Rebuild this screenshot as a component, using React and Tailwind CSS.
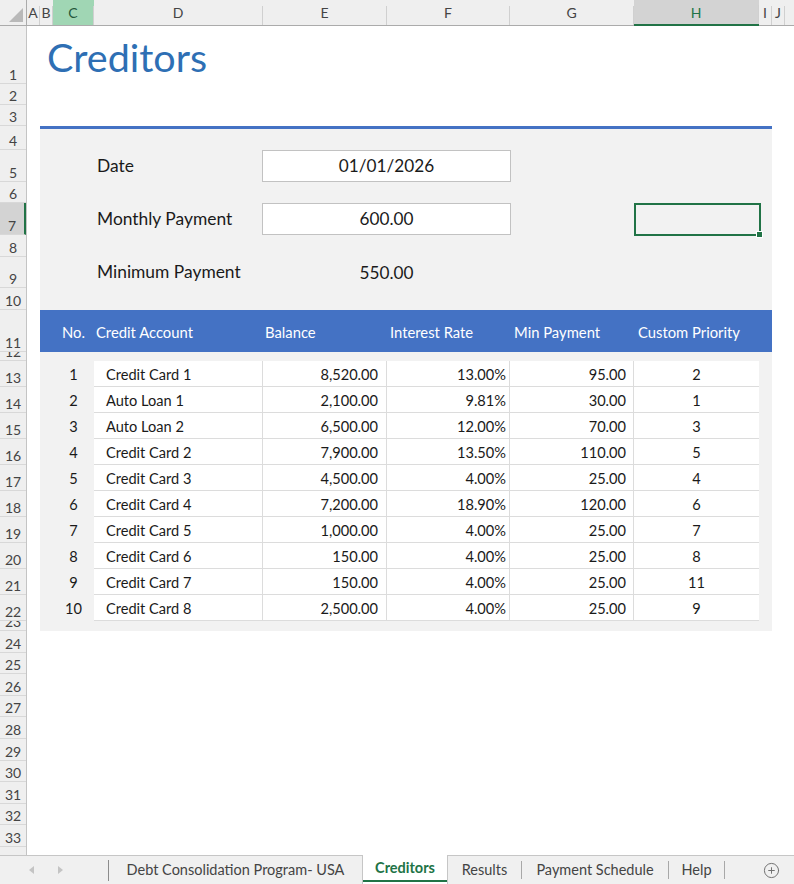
import { CirclePlus } from "lucide-react";

const rows = [
  [1, "Credit Card 1", "8,520.00", "13.00%", "95.00", "2"],
  [2, "Auto Loan 1", "2,100.00", "9.81%", "30.00", "1"],
  [3, "Auto Loan 2", "6,500.00", "12.00%", "70.00", "3"],
  [4, "Credit Card 2", "7,900.00", "13.50%", "110.00", "5"],
  [5, "Credit Card 3", "4,500.00", "4.00%", "25.00", "4"],
  [6, "Credit Card 4", "7,200.00", "18.90%", "120.00", "6"],
  [7, "Credit Card 5", "1,000.00", "4.00%", "25.00", "7"],
  [8, "Credit Card 6", "150.00", "4.00%", "25.00", "8"],
  [9, "Credit Card 7", "150.00", "4.00%", "25.00", "11"],
  [10, "Credit Card 8", "2,500.00", "4.00%", "25.00", "9"],
];

// row header labels with their heights
const rowHeads = [
  ["1", "h-[58px]"],
  ["2", "h-[21px]"],
  ["3", "h-[21px]"],
  ["4", "h-[24px]"],
  ["5", "h-[32px]"],
  ["6", "h-[21px]"],
  ["7", "h-[32px]"],
  ["8", "h-[22px]"],
  ["9", "h-[31px]"],
  ["10", "h-[22px]"],
  ["11", "h-[42px]"],
  ["12", "h-[9px]"],
  ["13", "h-[26px]"],
  ["14", "h-[26px]"],
  ["15", "h-[26px]"],
  ["16", "h-[26px]"],
  ["17", "h-[26px]"],
  ["18", "h-[26px]"],
  ["19", "h-[26px]"],
  ["20", "h-[26px]"],
  ["21", "h-[26px]"],
  ["22", "h-[26px]"],
  ["23", "h-[10px]"],
  ["24", "h-[21.6px]"],
  ["25", "h-[21.6px]"],
  ["26", "h-[21.6px]"],
  ["27", "h-[21.6px]"],
  ["28", "h-[21.6px]"],
  ["29", "h-[21.6px]"],
  ["30", "h-[21.6px]"],
  ["31", "h-[21.6px]"],
  ["32", "h-[21.6px]"],
  ["33", "h-[21.6px]"],
  ["34", "h-[21.6px]"],
];

const cols = [
  ["A", "w-[13px]", ""],
  ["B", "w-[13px]", ""],
  ["C", "w-[41px]", "bg-[#a0d6b4] text-[#24573a]"],
  ["D", "w-[169px]", ""],
  ["E", "w-[124px]", ""],
  ["F", "w-[123px]", ""],
  ["G", "w-[124px]", ""],
  ["H", "w-[125px]", "bg-[#d3d3d3] text-[#217346] border-b-2 border-b-[#217346]"],
  ["I", "w-[13px]", ""],
  ["J", "w-[13px]", ""],
];

function ColumnHeader() {
  return (
    <div className="flex h-[26px] bg-[#efefef] text-[14px] text-[#444]">
      <div className="w-[27px] flex items-end justify-end pr-[3px] pb-[3px] border-b border-r border-[#ababab]">
        <svg width="14" height="14" viewBox="0 0 14 14">
          <path d="M14 0 L14 14 L0 14 Z" fill="#b9b9b9" />
        </svg>
      </div>
      {cols.map(([l, w, extra]) => (
        <div
          key={l}
          className={`${w} flex h-full border-b border-[#ababab] ${extra}`}
        >
          <span className="flex-1 text-center self-center">{l}</span>
          <div className="w-px h-[19px] self-end bg-[#d0d0d0]" />
        </div>
      ))}
      <div className="flex-1 border-b border-[#ababab]" />
    </div>
  );
}

function RowHeader() {
  return (
    <div className="w-[27px] shrink-0 bg-[#efefef] border-r border-[#c4c4c4] text-[14px] text-[#444]">
      {rowHeads.map(([n, h]) => (
        <div
          key={n}
          className={`${h} flex items-end justify-center overflow-hidden leading-[17px] border-b border-[#d8d8d8] ${
            n === "7" ? "bg-[#d3d3d3] border-r-2 border-r-[#217346]" : ""
          }`}
        >
          {n}
        </div>
      ))}
    </div>
  );
}

function Field({ label, value, boxed }) {
  return (
    <div className="flex h-full items-center">
      <div className="w-[54px]" />
      <div className="w-[168px] pl-[3px] text-[17.4px]">{label}</div>
      <div
        className={`w-[249px] h-full flex items-center justify-center text-[17.2px] ${
          boxed ? "bg-white border border-[#c2c2c2]" : ""
        }`}
      >
        {value}
      </div>
    </div>
  );
}

function Sheet() {
  return (
    <div className="flex-1 bg-white text-[#1a1a1a]">
      <div className="h-[100px]">
        <div className="h-[58px] flex items-end pl-[20px] pb-[8px]">
          <h1 className="text-[39.5px] leading-none text-[#2e6fb4]">Creditors</h1>
        </div>
      </div>

      <div className="ml-[13px] w-[732px] bg-[#f2f2f2] border-t-[3px] border-[#4472c4]">
        <div className="h-[21px]" />
        <div className="h-[32px]">
          <Field label="Date" value="01/01/2026" boxed />
        </div>
        <div className="h-[21px]" />
        <div className="h-[32px] flex">
          <Field label="Monthly Payment" value="600.00" boxed />
          <div className="w-[123px]" />
          <div className="relative w-[127px] h-[33px] border-2 border-[#217346]">
            <div className="absolute -right-[4px] -bottom-[4px] w-[7px] h-[7px] bg-[#217346] border border-white" />
          </div>
        </div>
        <div className="h-[22px]" />
        <div className="h-[31px]">
          <Field label="Minimum Payment" value="550.00" />
        </div>
        <div className="h-[22px]" />

        <div className="h-[42px] flex items-center pt-[2px] bg-[#4472c4] text-white text-[14.8px]">
          <div className="w-[13px]" />
          <div className="w-[41px] text-center">No.</div>
          <div className="w-[169px] pl-[2px]">Credit Account</div>
          <div className="w-[124px] pl-[2px]">Balance</div>
          <div className="w-[123px] pl-[3px]">Interest Rate</div>
          <div className="w-[124px] pl-[4px]">Min Payment</div>
          <div className="w-[125px] pl-[4px]">Custom Priority</div>
        </div>
        <div className="h-[9px]" />

        {rows.map(([no, name, bal, rate, min, pri]) => (
          <div key={no} className="h-[26px] flex text-[14.6px]">
            <div className="w-[13px]" />
            <div className="w-[41px] flex items-center justify-center pt-[2px]">{no}</div>
            <div className="w-[169px] flex items-center pl-[12px] pt-[2px] bg-white border-b border-r border-[#dcdcdc]">
              {name}
            </div>
            <div className="w-[124px] flex items-center justify-end pr-[8px] pt-[2px] bg-white border-b border-r border-[#dcdcdc]">
              {bal}
            </div>
            <div className="w-[123px] flex items-center justify-end pr-[3px] pt-[2px] bg-white border-b border-r border-[#dcdcdc]">
              {rate}
            </div>
            <div className="w-[124px] flex items-center justify-end pr-[7px] pt-[2px] bg-white border-b border-r border-[#dcdcdc]">
              {min}
            </div>
            <div className="w-[125px] flex items-center justify-center pt-[2px] bg-white border-b border-[#dcdcdc]">
              {pri}
            </div>
          </div>
        ))}
        <div className="h-[10px]" />
      </div>
    </div>
  );
}

function Tabs() {
  return (
    <div className="flex h-[29px] bg-[#f0f0f0] border-t border-[#c6c6c6] text-[14.5px] text-[#444]">
      <div className="w-[108px] flex items-center">
        <svg className="ml-[29px]" width="5" height="8" viewBox="0 0 5 8">
          <path d="M5 0 L0 4 L5 8 Z" fill="#c4c4c4" />
        </svg>
        <svg className="ml-[24px]" width="5" height="8" viewBox="0 0 5 8">
          <path d="M0 0 L5 4 L0 8 Z" fill="#c4c4c4" />
        </svg>
      </div>
      <div className="w-px h-[21px] self-center bg-[#8c8c8c]" />
      <div className="w-[253px] flex items-center justify-center">
        Debt Consolidation Program- USA
      </div>
      <div className="w-[86px] -mt-px flex flex-col bg-white border-x border-[#c6c6c6]">
        <div className="flex-1 flex items-center justify-center font-bold text-[#217346]">
          Creditors
        </div>
        <div className="h-[2px] bg-[#217346]" />
        <div className="h-[2px]" />
      </div>
      <div className="w-[73px] flex items-center justify-center">Results</div>
      <div className="w-px h-[18px] self-center bg-[#a8a8a8]" />
      <div className="w-[146px] flex items-center justify-center">
        Payment Schedule
      </div>
      <div className="w-px h-[18px] self-center bg-[#a8a8a8]" />
      <div className="w-[55px] flex items-center justify-center">Help</div>
      <div className="w-px h-[18px] self-center bg-[#a8a8a8]" />
      <div className="flex items-center pl-[38px]">
        <CirclePlus size={17} strokeWidth={1.4} color="#707070" />
      </div>
    </div>
  );
}

export default function App() {
  return (
    <div className="w-[794px] h-[884px] overflow-hidden bg-white font-['Lato',sans-serif]">
      <ColumnHeader />
      <div className="flex h-[829px] overflow-hidden">
        <RowHeader />
        <Sheet />
      </div>
      <Tabs />
    </div>
  );
}
